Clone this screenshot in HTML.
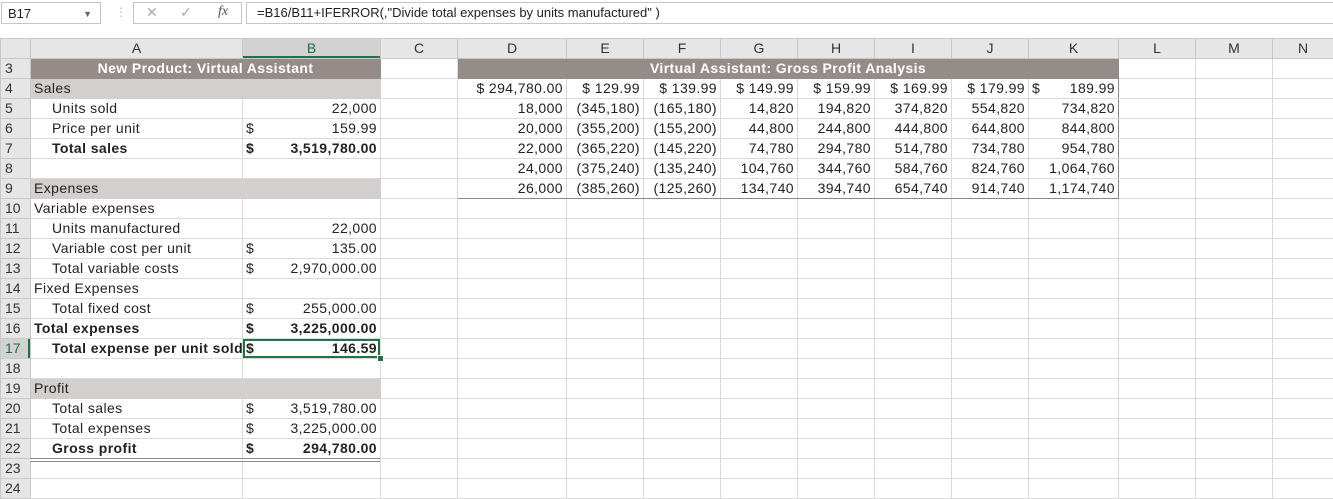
<!DOCTYPE html>
<html><head><meta charset="utf-8"><style>
body{margin:0;width:1333px;height:490px;overflow:hidden;background:#fff;font-family:"Liberation Sans",sans-serif;position:relative}
.fb{position:absolute;left:0;top:0;width:1333px;height:30px;background:#fff}
.nb{position:absolute;left:1px;top:2px;width:100px;height:22px;border:1px solid #c6c6c6;font-size:13px;line-height:22px;padding-left:6px;box-sizing:border-box;color:#222}
.fx{position:absolute;left:133px;top:2px;width:109px;height:22px;border:1px solid #c6c6c6;box-sizing:border-box;color:#aaa;font-size:14px}
.ff{position:absolute;left:246px;top:2px;width:1090px;height:22px;border:1px solid #c6c6c6;box-sizing:border-box;font-size:13px;line-height:20px;padding-left:10px;color:#222}
table{position:absolute;left:0;top:38px;border-collapse:collapse;table-layout:fixed;width:1333px}
td{height:19px;border:1px solid #dadada;padding:0 3px;font-size:14px;letter-spacing:0.4px;color:#222;white-space:nowrap;overflow:hidden;line-height:19px}
tr.h td{background:#e6e6e6;text-align:center;border-color:#c8c8c8;color:#333;font-size:14px;letter-spacing:0}
td.rh{background:#e6e6e6;text-align:left;padding-left:4px;border-color:#c8c8c8;font-size:14px;color:#333;letter-spacing:0}
.t{background:#958c89;color:#fff;font-weight:bold;text-align:center;border-color:#958c89}
.g{background:#d3cfce;border-color:#d3cfce}
.r{text-align:right}.b{font-weight:bold}.i{padding-left:21px}
.d{display:flex;justify-content:space-between}
.pt{border-top:1px solid #8a8a8a}
.box{border-left:1px solid #8a8a8a;border-right:1px solid #8a8a8a}
</style></head><body>
<div class="fb"><div class="nb">B17<span style="position:absolute;right:8px;top:0;font-size:9px;color:#666">▼</span></div>
<span style="position:absolute;left:115px;top:5px;color:#bbb;font-size:12px">⋮</span>
<div class="fx"><span style="position:absolute;left:12px;top:1px">✕</span><span style="position:absolute;left:46px;top:1px">✓</span><span style="position:absolute;left:84px;top:1px;color:#555;font-style:italic;font-family:'Liberation Serif',serif">fx</span></div>
<div class="ff">=B16/B11+IFERROR(,"Divide total expenses by units manufactured" )</div></div>
<table>
<colgroup><col style="width:30px"><col style="width:212px"><col style="width:138px"><col style="width:77px"><col style="width:109px"><col style="width:77px"><col style="width:77px"><col style="width:77px"><col style="width:77px"><col style="width:77px"><col style="width:77px"><col style="width:90px"><col style="width:77px"><col style="width:77px"><col style="width:61px"></colgroup>
<tr class="h"><td></td><td>A</td><td style="background:#d2d2d2;color:#1e6e3c;box-shadow:inset 0 -2px 0 #217346">B</td><td>C</td><td>D</td><td>E</td><td>F</td><td>G</td><td>H</td><td>I</td><td>J</td><td>K</td><td>L</td><td>M</td><td>N</td></tr>
<tr><td class="rh">3</td><td class="t" colspan="2">New Product: Virtual Assistant</td><td></td><td class="t" colspan="8">Virtual Assistant: Gross Profit Analysis</td><td></td><td></td><td></td></tr>
<tr><td class="rh">4</td><td class="g" colspan="2">Sales</td><td></td><td class="box r" style="border-right-color:#dadada">$ 294,780.00</td><td class="r">$ 129.99</td><td class="r">$ 139.99</td><td class="r">$ 149.99</td><td class="r">$ 159.99</td><td class="r">$ 169.99</td><td class="r">$ 179.99</td><td class="box" style="border-left-color:#dadada"><div class="d"><span>$</span><span>189.99</span></div></td><td></td><td></td><td></td></tr>
<tr><td class="rh">5</td><td class="i">Units sold</td><td class="r">22,000</td><td></td><td class="r pt" style="border-left:1px solid #8a8a8a">18,000</td><td class="r pt">(345,180)</td><td class="r pt">(165,180)</td><td class="r pt">14,820</td><td class="r pt">194,820</td><td class="r pt">374,820</td><td class="r pt">554,820</td><td class="r pt" style="border-right:1px solid #8a8a8a">734,820</td><td></td><td></td><td></td></tr>
<tr><td class="rh">6</td><td class="i">Price per unit</td><td><div class="d"><span>$</span><span>159.99</span></div></td><td></td><td class="r box" style="border-right-color:#dadada">20,000</td><td class="r">(355,200)</td><td class="r">(155,200)</td><td class="r">44,800</td><td class="r">244,800</td><td class="r">444,800</td><td class="r">644,800</td><td class="r" style="border-right:1px solid #8a8a8a">844,800</td><td></td><td></td><td></td></tr>
<tr><td class="rh">7</td><td class="i b pt">Total sales</td><td class="b pt"><div class="d"><span>$</span><span>3,519,780.00</span></div></td><td></td><td class="r box" style="border-right-color:#dadada">22,000</td><td class="r">(365,220)</td><td class="r">(145,220)</td><td class="r">74,780</td><td class="r">294,780</td><td class="r">514,780</td><td class="r">734,780</td><td class="r" style="border-right:1px solid #8a8a8a">954,780</td><td></td><td></td><td></td></tr>
<tr><td class="rh">8</td><td></td><td></td><td></td><td class="r box" style="border-right-color:#dadada">24,000</td><td class="r">(375,240)</td><td class="r">(135,240)</td><td class="r">104,760</td><td class="r">344,760</td><td class="r">584,760</td><td class="r">824,760</td><td class="r" style="border-right:1px solid #8a8a8a">1,064,760</td><td></td><td></td><td></td></tr>
<tr><td class="rh">9</td><td class="g" colspan="2">Expenses</td><td></td><td class="r box" style="border-right-color:#dadada;border-bottom:1px solid #8a8a8a">26,000</td><td class="r" style="border-bottom:1px solid #8a8a8a">(385,260)</td><td class="r" style="border-bottom:1px solid #8a8a8a">(125,260)</td><td class="r" style="border-bottom:1px solid #8a8a8a">134,740</td><td class="r" style="border-bottom:1px solid #8a8a8a">394,740</td><td class="r" style="border-bottom:1px solid #8a8a8a">654,740</td><td class="r" style="border-bottom:1px solid #8a8a8a">914,740</td><td class="r" style="border-right:1px solid #8a8a8a;border-bottom:1px solid #8a8a8a">1,174,740</td><td></td><td></td><td></td></tr>
<tr><td class="rh">10</td><td>Variable expenses</td><td></td><td></td><td></td><td></td><td></td><td></td><td></td><td></td><td></td><td></td><td></td><td></td><td></td></tr>
<tr><td class="rh">11</td><td class="i">Units manufactured</td><td class="r">22,000</td><td></td><td></td><td></td><td></td><td></td><td></td><td></td><td></td><td></td><td></td><td></td><td></td></tr>
<tr><td class="rh">12</td><td class="i">Variable cost per unit</td><td><div class="d"><span>$</span><span>135.00</span></div></td><td></td><td></td><td></td><td></td><td></td><td></td><td></td><td></td><td></td><td></td><td></td><td></td></tr>
<tr><td class="rh">13</td><td class="i">Total variable costs</td><td><div class="d"><span>$</span><span>2,970,000.00</span></div></td><td></td><td></td><td></td><td></td><td></td><td></td><td></td><td></td><td></td><td></td><td></td><td></td></tr>
<tr><td class="rh">14</td><td>Fixed Expenses</td><td></td><td></td><td></td><td></td><td></td><td></td><td></td><td></td><td></td><td></td><td></td><td></td><td></td></tr>
<tr><td class="rh">15</td><td class="i">Total fixed cost</td><td><div class="d"><span>$</span><span>255,000.00</span></div></td><td></td><td></td><td></td><td></td><td></td><td></td><td></td><td></td><td></td><td></td><td></td><td></td></tr>
<tr><td class="rh">16</td><td class="b pt">Total expenses</td><td class="b pt"><div class="d"><span>$</span><span>3,225,000.00</span></div></td><td></td><td></td><td></td><td></td><td></td><td></td><td></td><td></td><td></td><td></td><td></td><td></td></tr>
<tr><td class="rh" style="background:#d2d2d2;color:#1e6e3c;box-shadow:inset -2px 0 0 #217346">17</td><td class="i b">Total expense per unit sold</td><td class="b" style="box-shadow:inset 0 0 0 2px #217346"><div class="d"><span>$</span><span>146.59</span></div></td><td></td><td></td><td></td><td></td><td></td><td></td><td></td><td></td><td></td><td></td><td></td><td></td></tr>
<tr><td class="rh">18</td><td></td><td></td><td></td><td></td><td></td><td></td><td></td><td></td><td></td><td></td><td></td><td></td><td></td><td></td></tr>
<tr><td class="rh">19</td><td class="g" colspan="2">Profit</td><td></td><td></td><td></td><td></td><td></td><td></td><td></td><td></td><td></td><td></td><td></td><td></td></tr>
<tr><td class="rh">20</td><td class="i">Total sales</td><td><div class="d"><span>$</span><span>3,519,780.00</span></div></td><td></td><td></td><td></td><td></td><td></td><td></td><td></td><td></td><td></td><td></td><td></td><td></td></tr>
<tr><td class="rh">21</td><td class="i">Total expenses</td><td><div class="d"><span>$</span><span>3,225,000.00</span></div></td><td></td><td></td><td></td><td></td><td></td><td></td><td></td><td></td><td></td><td></td><td></td><td></td></tr>
<tr><td class="rh">22</td><td class="i b pt">Gross profit</td><td class="b pt"><div class="d"><span>$</span><span>294,780.00</span></div></td><td></td><td></td><td></td><td></td><td></td><td></td><td></td><td></td><td></td><td></td><td></td><td></td></tr>
<tr><td class="rh">23</td><td></td><td></td><td></td><td></td><td></td><td></td><td></td><td></td><td></td><td></td><td></td><td></td><td></td><td></td></tr>
<tr><td class="rh">24</td><td></td><td></td><td></td><td></td><td></td><td></td><td></td><td></td><td></td><td></td><td></td><td></td><td></td><td></td></tr>
</table>
<div style="position:absolute;left:30px;top:458px;width:350px;height:1px;background:#8a8a8a"></div>
<div style="position:absolute;left:30px;top:459px;width:350px;height:2px;background:#fff"></div>
<div style="position:absolute;left:30px;top:461px;width:350px;height:1px;background:#8a8a8a"></div>
<div style="position:absolute;left:377px;top:355px;width:5px;height:5px;background:#217346;border:1px solid #fff"></div>
</body></html>
